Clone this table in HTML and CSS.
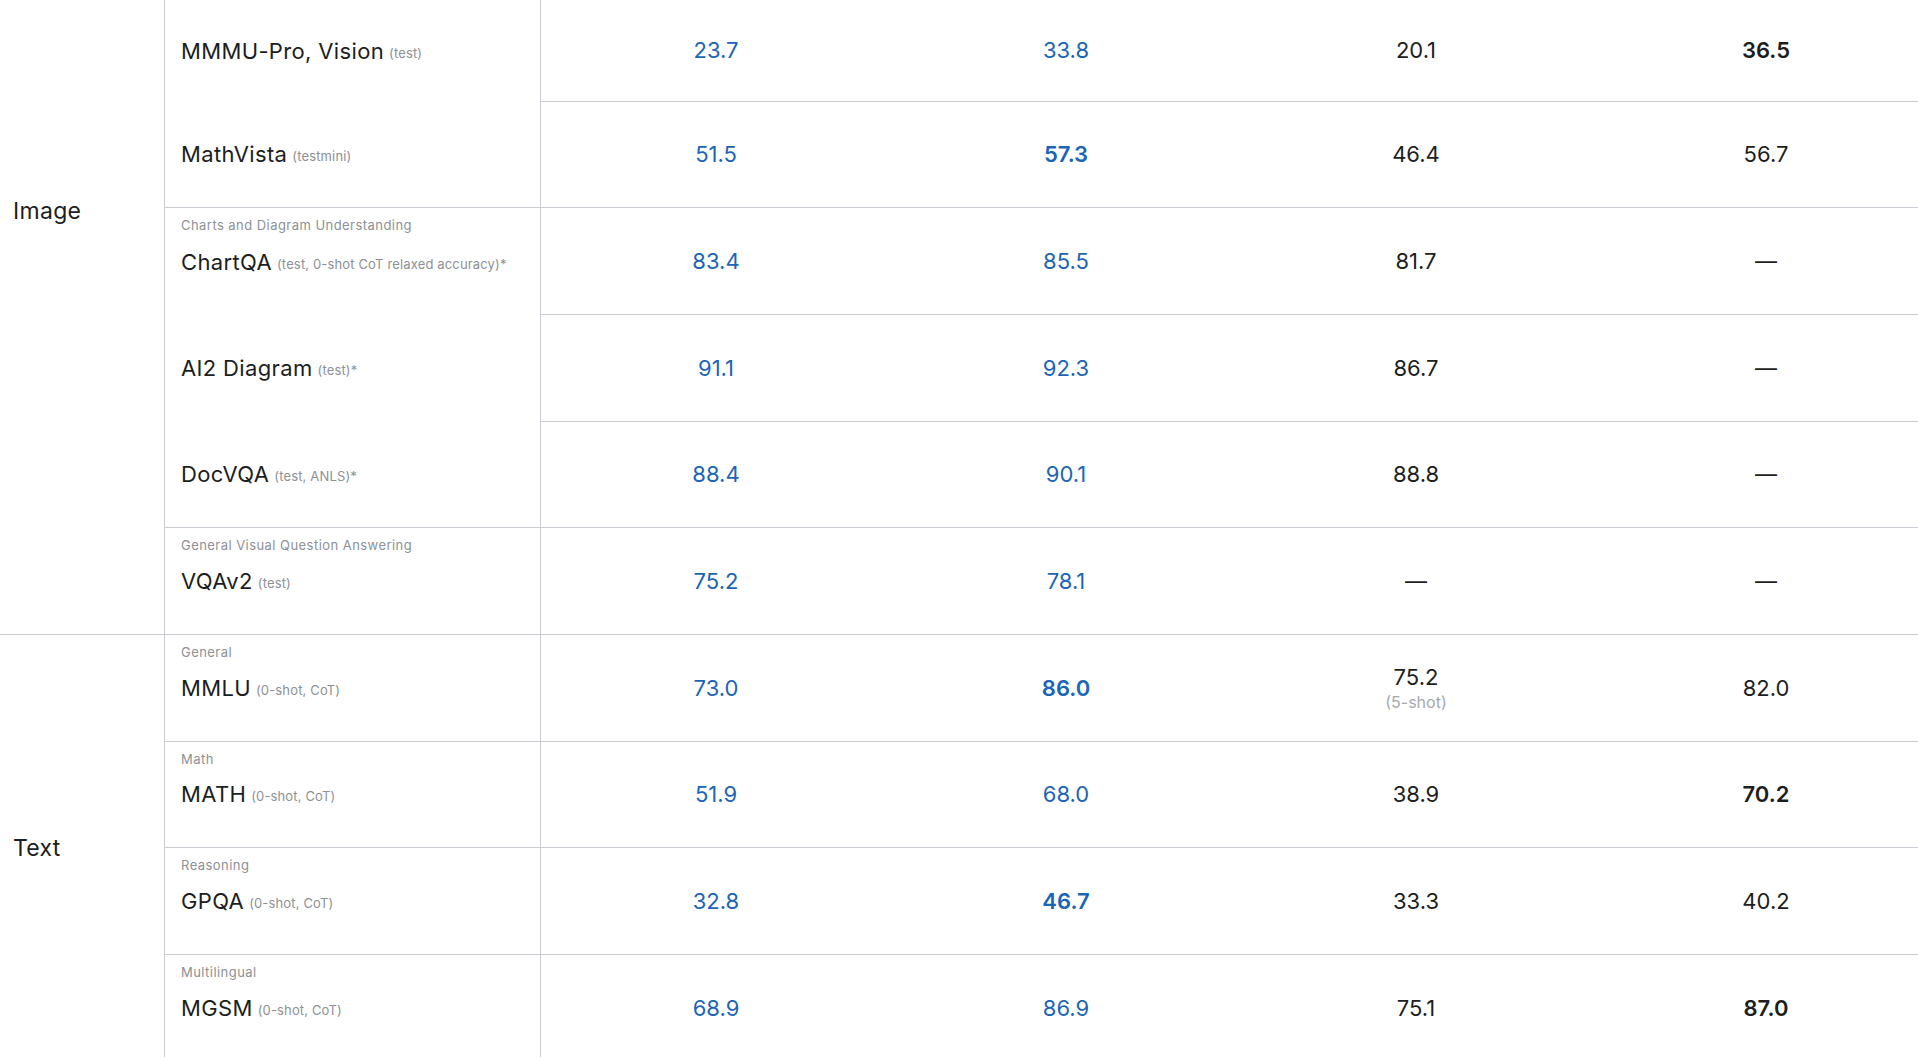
FILE: index.html
```html
<!DOCTYPE html>
<html lang="en">
<head>
<meta charset="utf-8">
<title>Benchmarks</title>
<link rel="stylesheet" href="styles.css">
</head>
<body>
<div class="table">
  <div class="cat cat-image"><span>Image</span></div>
  <div class="cat cat-text"><span>Text</span></div>

  <div class="bench"><span class="name">MMMU-Pro, Vision</span><span class="note">(test)</span></div>
  <div class="num blue">23.7</div>
  <div class="num blue">33.8</div>
  <div class="num">20.1</div>
  <div class="num bold">36.5</div>

  <div class="bench end"><span class="name">MathVista</span><span class="note">(testmini)</span></div>
  <div class="num blue">51.5</div>
  <div class="num blue bold">57.3</div>
  <div class="num">46.4</div>
  <div class="num">56.7</div>

  <div class="bench"><span class="label">Charts and Diagram Understanding</span><span class="name">ChartQA</span><span class="note">(test, 0-shot CoT relaxed accuracy)*</span></div>
  <div class="num blue">83.4</div>
  <div class="num blue">85.5</div>
  <div class="num">81.7</div>
  <div class="num">—</div>

  <div class="bench"><span class="name">AI2 Diagram</span><span class="note">(test)*</span></div>
  <div class="num blue">91.1</div>
  <div class="num blue">92.3</div>
  <div class="num">86.7</div>
  <div class="num">—</div>

  <div class="bench end"><span class="name">DocVQA</span><span class="note">(test, ANLS)*</span></div>
  <div class="num blue">88.4</div>
  <div class="num blue">90.1</div>
  <div class="num">88.8</div>
  <div class="num">—</div>

  <div class="bench end"><span class="label">General Visual Question Answering</span><span class="name">VQAv2</span><span class="note">(test)</span></div>
  <div class="num blue">75.2</div>
  <div class="num blue">78.1</div>
  <div class="num">—</div>
  <div class="num">—</div>

  <div class="bench end"><span class="label">General</span><span class="name">MMLU</span><span class="note">(0-shot, CoT)</span></div>
  <div class="num blue">73.0</div>
  <div class="num blue bold">86.0</div>
  <div class="num stack"><span>75.2</span><span class="sub">(5-shot)</span></div>
  <div class="num">82.0</div>

  <div class="bench end"><span class="label">Math</span><span class="name">MATH</span><span class="note">(0-shot, CoT)</span></div>
  <div class="num blue">51.9</div>
  <div class="num blue">68.0</div>
  <div class="num">38.9</div>
  <div class="num bold">70.2</div>

  <div class="bench end"><span class="label">Reasoning</span><span class="name">GPQA</span><span class="note">(0-shot, CoT)</span></div>
  <div class="num blue">32.8</div>
  <div class="num blue bold">46.7</div>
  <div class="num">33.3</div>
  <div class="num">40.2</div>

  <div class="bench end"><span class="label">Multilingual</span><span class="name">MGSM</span><span class="note">(0-shot, CoT)</span></div>
  <div class="num blue">68.9</div>
  <div class="num blue">86.9</div>
  <div class="num">75.1</div>
  <div class="num bold">87.0</div>
</div>
</body>
</html>
```

FILE: styles.css
```css
html, body {
  margin: 0;
  padding: 0;
  background: #ffffff;
  overflow: hidden;
}

body {
  width: 1918px;
  height: 1057px;
  font-family: Inter, "Noto Sans", "Liberation Sans", sans-serif;
  color: #1c1e21;
}

.table {
  display: grid;
  grid-template-columns: 165px 376px repeat(4, 350px);
  grid-template-rows: 101.5px repeat(9, 106.7px);
  width: 1941px;
}

.table > div {
  box-sizing: border-box;
}

.cat {
  grid-column: 1;
  border-right: 1px solid #c9ccd0;
  display: flex;
  align-items: center;
  padding-left: 13px;
  font-size: 23px;
  letter-spacing: 0.3px;
}

.cat-image {
  grid-row: 1 / 7;
  border-bottom: 1px solid #c9ccd0;
  padding-bottom: 212px;
}

.cat-text {
  grid-row: 7 / 11;
}

.bench {
  position: relative;
  border-right: 1px solid #c9ccd0;
  display: flex;
  align-items: center;
  padding-left: 16px;
  white-space: nowrap;
}

.bench.end {
  border-bottom: 1px solid #c9ccd0;
}

.name {
  font-size: 22px;
  letter-spacing: 0.35px;
}

.note {
  font-size: 13px;
  color: #8d9196;
  margin-left: 5px;
  margin-top: 4px;
  letter-spacing: 0.15px;
}

.label {
  position: absolute;
  top: 9px;
  left: 16px;
  font-size: 13px;
  color: #8d9196;
  letter-spacing: 0.45px;
}

.num {
  border-bottom: 1px solid #c9ccd0;
  display: flex;
  align-items: center;
  justify-content: center;
  font-size: 22px;
  color: #1c1e21;
}

.num.blue {
  color: #1b65b6;
}

.num.bold {
  font-weight: 600;
}

.num.stack {
  flex-direction: column;
  line-height: 27px;
  padding-top: 2px;
}

.sub {
  font-size: 16px;
  color: #a6a9ae;
  line-height: 22px;
}
```
